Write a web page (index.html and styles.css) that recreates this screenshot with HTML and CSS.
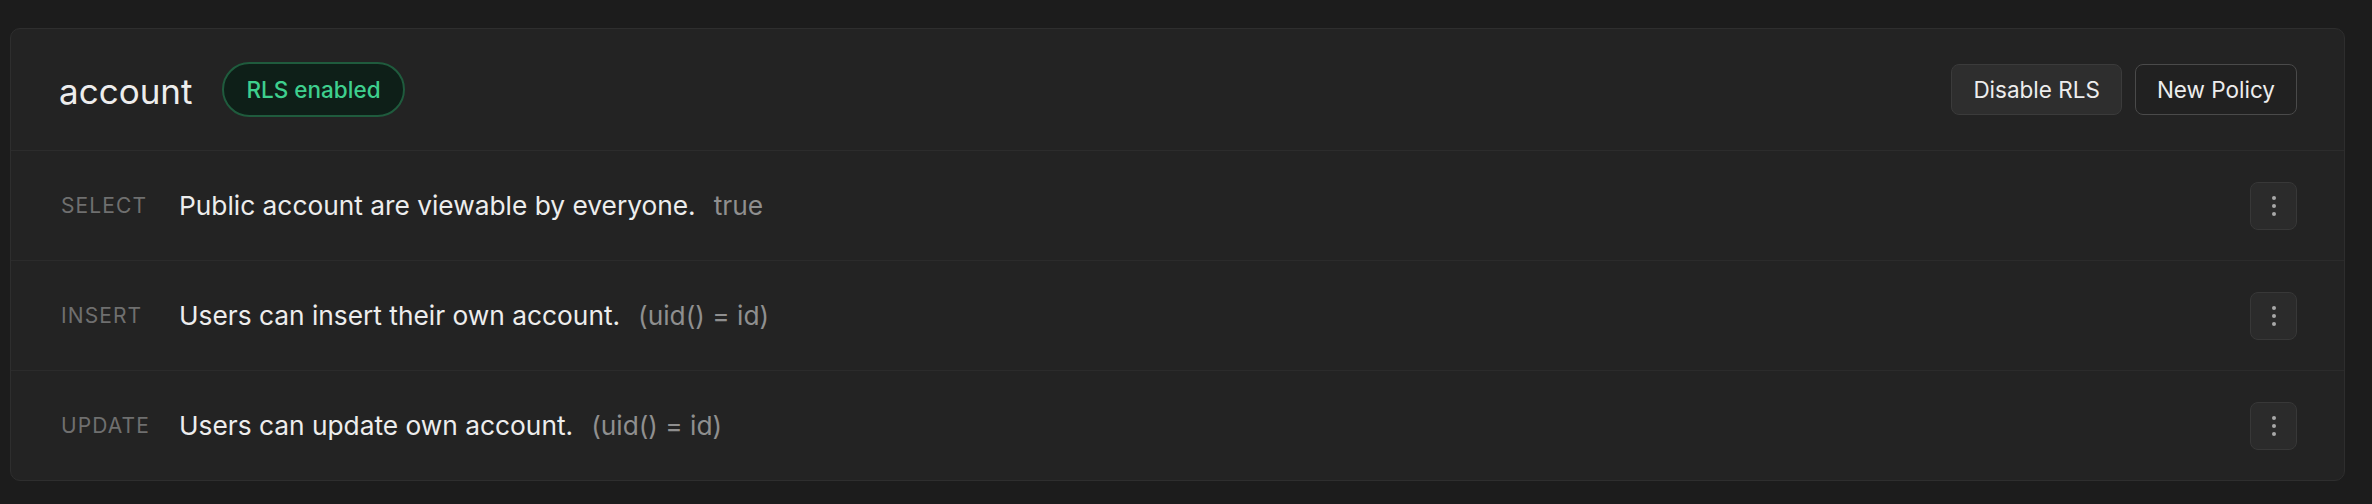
FILE: index.html
```html
<!DOCTYPE html>
<html lang="en">
<head>
<meta charset="utf-8">
<title>account policies</title>
<link rel="stylesheet" href="styles.css">
</head>
<body>
<section class="card">
  <header class="card-header">
    <div class="title-group">
      <h2 class="table-name">account</h2>
      <span class="badge">RLS enabled</span>
    </div>
    <div class="actions">
      <button class="btn btn-secondary">Disable RLS</button>
      <button class="btn btn-outline">New Policy</button>
    </div>
  </header>
  <div class="policy-row">
    <span class="cmd">SELECT</span>
    <span class="policy-name">Public account are viewable by everyone.</span>
    <span class="policy-expr">true</span>
    <button class="kebab" aria-label="More"><svg width="6" height="22" viewBox="0 0 6 22"><circle cx="3" cy="3" r="2"/><circle cx="3" cy="11" r="2"/><circle cx="3" cy="19" r="2"/></svg></button>
  </div>
  <div class="policy-row">
    <span class="cmd">INSERT</span>
    <span class="policy-name">Users can insert their own account.</span>
    <span class="policy-expr">(uid() = id)</span>
    <button class="kebab" aria-label="More"><svg width="6" height="22" viewBox="0 0 6 22"><circle cx="3" cy="3" r="2"/><circle cx="3" cy="11" r="2"/><circle cx="3" cy="19" r="2"/></svg></button>
  </div>
  <div class="policy-row">
    <span class="cmd">UPDATE</span>
    <span class="policy-name">Users can update own account.</span>
    <span class="policy-expr">(uid() = id)</span>
    <button class="kebab" aria-label="More"><svg width="6" height="22" viewBox="0 0 6 22"><circle cx="3" cy="3" r="2"/><circle cx="3" cy="11" r="2"/><circle cx="3" cy="19" r="2"/></svg></button>
  </div>
</section>
</body>
</html>
```

FILE: styles.css
```css
* { box-sizing: border-box; }

html, body {
  margin: 0;
  background: #1c1c1c;
}

body {
  padding: 28px 27px 22px 10px;
  font-family: Inter, "Liberation Sans", sans-serif;
  color: #ededed;
}

.card {
  background: #232323;
  border: 1px solid #2e2e2e;
  border-radius: 10px;
  overflow: hidden;
}

.card-header {
  height: 122px;
  border-bottom: 1px solid #2c2c2c;
  display: flex;
  align-items: center;
  justify-content: space-between;
  padding: 0 47px 0 48px;
}

.title-group {
  display: flex;
  align-items: center;
  gap: 30px;
}

.table-name {
  margin: 0;
  font-size: 35px;
  font-weight: 400;
  color: #ededed;
  line-height: 1;
  padding-top: 4px;
}

.badge {
  display: inline-flex;
  align-items: center;
  height: 55px;
  padding: 0 22px;
  border-radius: 28px;
  background: #0e1f18;
  border: 2px solid #1f5b3d;
  color: #3ecf8e;
  font-size: 22.5px;
  font-weight: 500;
}

.actions {
  display: flex;
  gap: 13px;
}

.btn {
  height: 51px;
  padding: 0 21px;
  border-radius: 8px;
  font-family: inherit;
  font-size: 22.5px;
  color: #ededed;
  cursor: pointer;
}

.btn-secondary {
  background: #2e2e2e;
  border: 1.5px solid #3b3b3b;
}

.btn-outline {
  background: #212121;
  border: 1.5px solid #4a4a4a;
}

.policy-row {
  height: 110px;
  display: flex;
  align-items: center;
  padding: 0 47px 0 48px;
  border-bottom: 1px solid #2b2b2b;
}

.policy-row:last-child {
  border-bottom: none;
  height: 109px;
}

.cmd {
  width: 120px;
  flex: none;
  font-size: 21px;
  letter-spacing: 1.1px;
  color: #6f6f6f;
  padding-left: 2px;
}

.policy-name {
  font-size: 26.3px;
  color: #ededed;
}

.policy-expr {
  margin-left: 18px;
  font-size: 26.3px;
  color: #8f8f8f;
}

.kebab {
  margin-left: auto;
  width: 47px;
  height: 48px;
  border-radius: 8px;
  background: #2b2b2b;
  border: 1.5px solid #383838;
  display: flex;
  align-items: center;
  justify-content: center;
  padding: 0;
  cursor: pointer;
}

.kebab svg {
  fill: #a8a8a8;
  display: block;
}
```
